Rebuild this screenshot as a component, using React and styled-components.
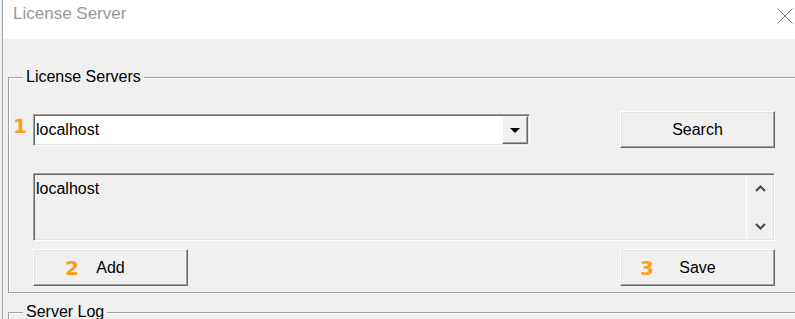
import React from 'react';
import styled, { createGlobalStyle } from 'styled-components';

const GlobalStyle = createGlobalStyle`
  html, body {
    margin: 0;
    padding: 0;
    background: #f0f0f0;
    overflow: hidden;
  }
  body {
    font-family: "Liberation Sans", Arial, sans-serif;
    color: #000;
  }
`;

const Window = styled.div`
  width: 792px;
  height: 319px;
  margin-left: 2px;
  border-left: 1px solid #a0a0a0;
  overflow: hidden;
  background: #f0f0f0;
`;

const TitleBar = styled.div`
  height: 39px;
  background: #fff;
  display: flex;
  justify-content: space-between;
  align-items: flex-start;
  padding: 0 2px 0 10px;
`;

const Title = styled.div`
  padding-top: 4px;
  font-size: 17px;
  line-height: 20px;
  color: #999;
`;

const CloseIcon = styled.svg`
  margin-top: 8px;
  width: 16px;
  height: 16px;
`;

const GroupBox = styled.fieldset`
  margin: ${p => p.$top}px -30px 0 5px;
  padding: 0 0 ${p => p.$bottom || 0}px 0;
  border: 1px solid #a0a0a0;
  box-shadow: inset 1px 1px 0 #fff, 1px 1px 0 #fff;
  min-width: 0;
`;

const Legend = styled.legend`
  margin-left: 14px;
  padding: 0 3px;
  background: #f0f0f0;
  font-size: 16px;
  line-height: 18px;
`;

const Content = styled.div`
  width: 742px;
  margin-left: 24px;
  padding-top: 25px;
`;

const Row = styled.div`
  display: flex;
  align-items: center;
  justify-content: space-between;
  margin-top: ${p => p.$gap || 0}px;
`;

const Sunken = styled.div`
  position: relative;
  box-sizing: border-box;
  border: 1px solid;
  border-color: #a0a0a0 #fff #fff #a0a0a0;
  box-shadow: inset 1px 1px 0 #696969, inset -1px -1px 0 #e3e3e3;
  padding: 1px;
  display: flex;
`;

const Combo = styled(Sunken)`
  width: 497px;
  height: 32px;
  background: #fff;
`;

const ComboText = styled.div`
  flex: 1;
  padding-left: 1px;
  font-size: 16px;
  line-height: 28px;
`;

const DropButton = styled.div`
  width: 26px;
  box-sizing: border-box;
  background: #f0f0f0;
  border: 1px solid;
  border-color: #fff #696969 #696969 #fff;
  box-shadow: inset -1px -1px 0 #a0a0a0;
  display: flex;
  align-items: center;
  justify-content: center;
  &::after {
    content: "";
    border-left: 5px solid transparent;
    border-right: 5px solid transparent;
    border-top: 5px solid #000;
    margin-top: 1px;
  }
`;

const Button = styled.button`
  position: relative;
  width: 155px;
  height: 37px;
  box-sizing: border-box;
  background: #f0f0f0;
  border: 1px solid;
  border-color: #fff #696969 #696969 #fff;
  box-shadow: inset -1px -1px 0 #a0a0a0, inset 1px 1px 0 #e3e3e3;
  font-family: "Liberation Sans", Arial, sans-serif;
  font-size: 16px;
  color: #000;
  padding: 0;
`;

const Marker = styled.span`
  position: absolute;
  left: ${p => p.$left}px;
  top: 50%;
  transform: translateY(calc(-50% + ${p => p.$dy || 0}px));
  font-family: "DejaVu Sans", "Liberation Sans", sans-serif;
  font-weight: 700;
  font-size: 20px;
  line-height: 22px;
  color: #f9a01b;
`;

const ListBox = styled(Sunken)`
  flex: 1;
  height: 68px;
  background: #f0f0f0;
`;

const ListText = styled.div`
  flex: 1;
  padding: 5px 0 0 1px;
  font-size: 16px;
  line-height: 18px;
`;

const ScrollBar = styled.div`
  width: 26px;
  border-left: 1px solid #fff;
  display: flex;
  flex-direction: column;
  justify-content: space-between;
`;

const ScrollArrow = styled.div`
  height: 26px;
  display: flex;
  align-items: center;
  justify-content: center;
`;

const Chevron = ({ up }) => (
  <svg width="11" height="7" viewBox="0 0 11 7">
    <polyline
      points={up ? '1,6 5.5,1.5 10,6' : '1,1 5.5,5.5 10,1'}
      fill="none"
      stroke="#4a4a4a"
      strokeWidth="2.2"
    />
  </svg>
);

export default function App() {
  return (
    <>
      <GlobalStyle />
      <Window>
        <TitleBar>
          <Title>License Server</Title>
          <CloseIcon viewBox="0 0 16 16">
            <path d="M0.5 0.5 L15.5 15.5 M15.5 0.5 L0.5 15.5" stroke="#777" strokeWidth="1" />
          </CloseIcon>
        </TitleBar>

        <GroupBox $top={29} $bottom={6}>
          <Legend>License Servers</Legend>
          <Content>
            <Row>
              <Combo>
                <Marker $left={-21} $dy={-4}>1</Marker>
                <ComboText>localhost</ComboText>
                <DropButton />
              </Combo>
              <Button>Search</Button>
            </Row>
            <Row $gap={25}>
              <ListBox>
                <ListText>localhost</ListText>
                <ScrollBar>
                  <ScrollArrow><Chevron up /></ScrollArrow>
                  <ScrollArrow><Chevron /></ScrollArrow>
                </ScrollBar>
              </ListBox>
            </Row>
            <Row $gap={8}>
              <Button>
                <Marker $left={31}>2</Marker>
                Add
              </Button>
              <Button>
                <Marker $left={19}>3</Marker>
                Save
              </Button>
            </Row>
          </Content>
        </GroupBox>

        <GroupBox $top={10}>
          <Legend>Server Log</Legend>
          <Content />
        </GroupBox>
      </Window>
    </>
  );
}
